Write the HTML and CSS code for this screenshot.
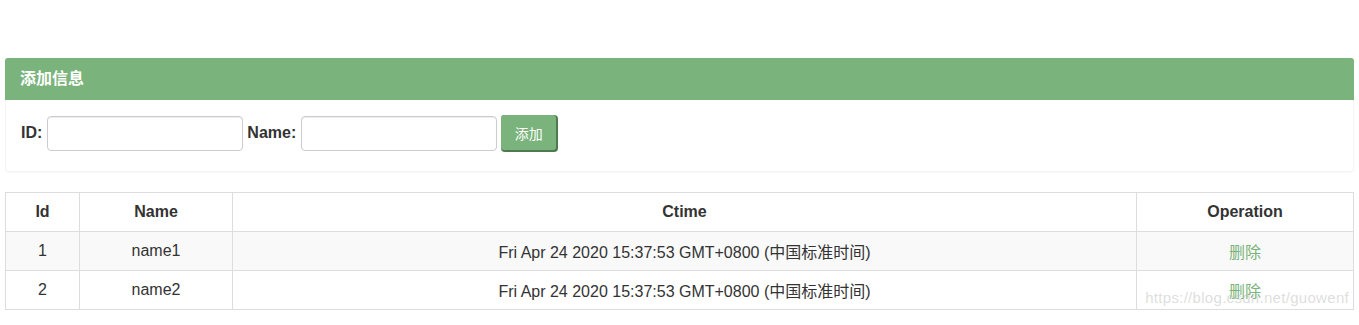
FILE: index.html
```html
<!DOCTYPE html>
<html lang="zh">
<head>
<meta charset="utf-8">
<title>添加信息</title>
<link rel="stylesheet" href="styles.css">
</head>
<body>
<div class="page">
  <div class="panel">
    <div class="panel-heading">添加信息</div>
    <div class="panel-body">
      <label class="lbl">ID:</label>
      <input class="field" type="text">
      <label class="lbl">Name:</label>
      <input class="field" type="text">
      <button class="btn">添加</button>
    </div>
  </div>
  <table class="tbl">
    <thead>
      <tr><th class="c1">Id</th><th class="c2">Name</th><th class="c3">Ctime</th><th class="c4">Operation</th></tr>
    </thead>
    <tbody>
      <tr class="odd"><td>1</td><td>name1</td><td>Fri Apr 24 2020 15:37:53 GMT+0800 (中国标准时间)</td><td><a class="del" href="#">删除</a></td></tr>
      <tr><td>2</td><td>name2</td><td>Fri Apr 24 2020 15:37:53 GMT+0800 (中国标准时间)</td><td><a class="del" href="#">删除</a></td></tr>
    </tbody>
  </table>
  <div class="watermark">https://blog.csdn.net/guowenf</div>
</div>
</body>
</html>
```

FILE: styles.css
```css
html, body {
  margin: 0;
  padding: 0;
  background: #fff;
}
body {
  font-family: "Liberation Sans", Arial, "Noto Sans CJK SC", sans-serif;
  font-size: 14px;
  color: #333;
}
.page {
  position: relative;
  padding: 58px 5px 0 5px;
}
.panel {
  border-radius: 4px;
  border: 1px solid #f4f4f4;
  border-top: none;
  box-shadow: 0 1px 1px rgba(0,0,0,0.03);
  height: 114px;
  box-sizing: border-box;
}
.panel-heading {
  background: #7ab37b;
  color: #fff;
  font-weight: bold;
  font-size: 16px;
  height: 42px;
  line-height: 42px;
  padding: 0 15px;
  border-radius: 3px 3px 0 0;
  margin: 0 -1px;
}
.panel-body {
  display: flex;
  align-items: center;
  padding: 15px 15px 0 15px;
  height: 35px;
}
.lbl {
  font-weight: bold;
  font-size: 16px;
  margin-right: 5px;
}
.field {
  width: 196px;
  height: 35px;
  box-sizing: border-box;
  border: 1px solid #ccc;
  border-radius: 4px;
  margin: 1px 4px 0 0;
  padding: 6px 12px;
  font-size: 14px;
  box-shadow: inset 0 1px 1px rgba(0,0,0,0.075);
}
.btn {
  width: 55px;
  height: 35px;
  background: #7ab37b;
  color: #fff;
  border: none;
  border-radius: 3px;
  box-shadow: 1px 1px 0 1px #4e7a4f;
  font-family: "Liberation Sans", Arial, "Noto Sans CJK SC", sans-serif;
  font-size: 14px;
  padding: 0;
  margin-left: 0;
}
.tbl {
  width: 100%;
  margin-top: 20px;
  border-collapse: collapse;
  font-size: 16px;
}
.tbl th, .tbl td {
  border: 1px solid #ddd;
  height: 39px;
  padding: 0 8px;
  text-align: center;
  box-sizing: border-box;
  vertical-align: middle;
}
.tbl th {
  font-weight: bold;
  color: #333;
}
.tbl td {
  color: #333;
}
.c1 { width: 74px; }
.c2 { width: 153px; }
.c4 { width: 217px; }
.odd td {
  background: #f9f9f9;
}
.del {
  color: #7ab37b;
  text-decoration: none;
}
.watermark {
  position: absolute;
  right: 10px;
  top: 289px;
  font-size: 15px;
  color: rgba(180,180,180,0.45);
  letter-spacing: 0.3px;
}
```
